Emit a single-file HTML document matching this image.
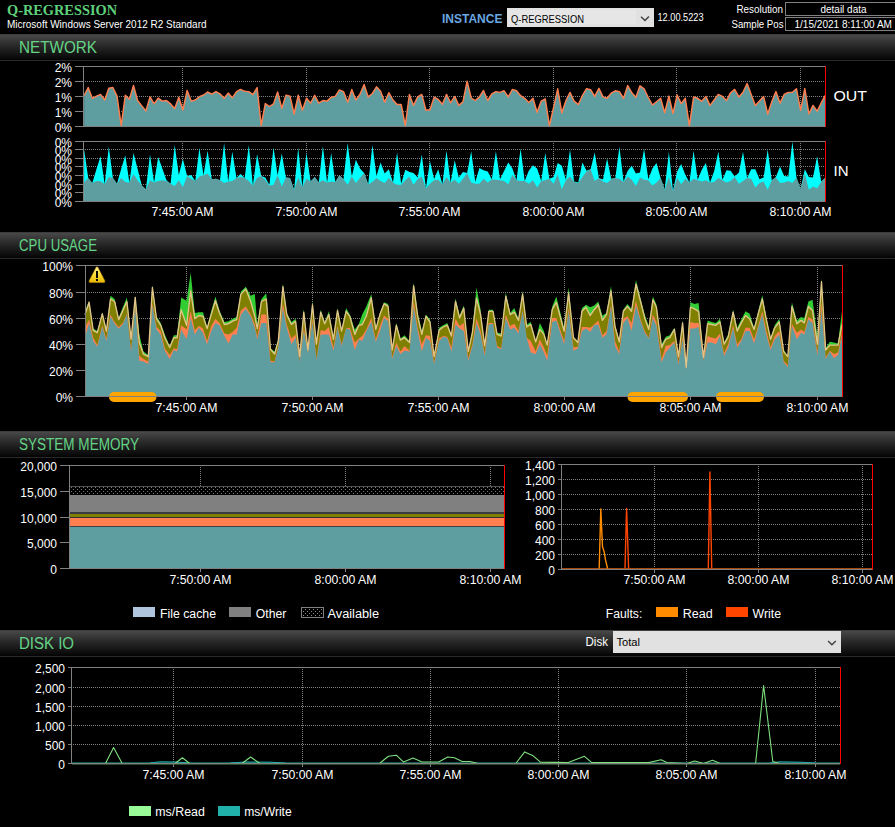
<!DOCTYPE html><html><head><meta charset="utf-8"><style>
*{margin:0;padding:0;box-sizing:border-box}
html,body{width:895px;height:827px;background:#000;overflow:hidden}
body{position:relative;font-family:"Liberation Sans", sans-serif;color:#fff}
.hdr{position:absolute;left:0;width:895px;height:27px;
 background:linear-gradient(#2e2e2e 0px,#4a4a4a 1px,#454545 2px,#2a2a2a 11px,#161616 19px,#0a0a0a 24px,#050505 25px,#050505 26px,#2a2a2a 26px,#2a2a2a 27px)}
.ht{position:absolute;left:19px;top:5px;font-size:15px;color:#5fd07c}
.dd{position:absolute;background:#e3e3e3;color:#000;font-size:11px;z-index:2}
.dd span{position:absolute;white-space:nowrap}
.dd i{position:absolute;width:7px;height:7px;border-right:1.3px solid #333;border-bottom:1.3px solid #333;transform:rotate(45deg) scale(0.9)}
svg.main{position:absolute;left:0;top:0;z-index:1}
</style></head><body>
<div class="hdr" style="top:34px"></div><div class="hdr" style="top:232px"></div><div class="hdr" style="top:431px"></div><div class="hdr" style="top:630px"></div>
<svg class="main" width="895" height="827" viewBox="0 0 895 827" shape-rendering="crispEdges"><defs><pattern id="dots" width="4" height="4" patternUnits="userSpaceOnUse"><rect x="0" y="0" width="1" height="1" fill="#909090"/><rect x="2" y="2" width="1" height="1" fill="#909090"/></pattern></defs>
<text x="7" y="15" font-size="15.5" fill="#5fd07c" text-anchor="start" font-weight="bold" font-family='"Liberation Serif", serif'  textLength="110" lengthAdjust="spacingAndGlyphs">Q-REGRESSION</text><text x="7" y="27.7" font-size="10.5" fill="#fff" text-anchor="start" font-weight="normal" font-family='"Liberation Sans", sans-serif'  textLength="199.5" lengthAdjust="spacingAndGlyphs">Microsoft Windows Server 2012 R2 Standard</text><text x="442" y="22.7" font-size="12" fill="#6aa6e0" text-anchor="start" font-weight="bold" font-family='"Liberation Sans", sans-serif' >INSTANCE</text><text x="657.5" y="20.8" font-size="10" fill="#fff" text-anchor="start" font-weight="normal" font-family='"Liberation Sans", sans-serif'  textLength="46" lengthAdjust="spacingAndGlyphs">12.00.5223</text><text x="736.5" y="12.5" font-size="10.5" fill="#fff" text-anchor="start" font-weight="normal" font-family='"Liberation Sans", sans-serif'  textLength="46.5" lengthAdjust="spacingAndGlyphs">Resolution</text><text x="731.5" y="27.8" font-size="10.5" fill="#fff" text-anchor="start" font-weight="normal" font-family='"Liberation Sans", sans-serif'  textLength="52" lengthAdjust="spacingAndGlyphs">Sample Pos</text><rect x="785.5" y="2.5" width="120" height="13" fill="none" stroke="#808080"/><rect x="785.5" y="17.5" width="120" height="13" fill="none" stroke="#808080"/><text x="820.5" y="13" font-size="10.5" fill="#fff" text-anchor="start" font-weight="normal" font-family='"Liberation Sans", sans-serif'  textLength="46" lengthAdjust="spacingAndGlyphs">detail data</text><text x="794.5" y="28" font-size="10.5" fill="#fff" text-anchor="start" font-weight="normal" font-family='"Liberation Sans", sans-serif'  textLength="97.5" lengthAdjust="spacingAndGlyphs">1/15/2021 8:11:00 AM</text><rect x="507" y="8" width="147" height="19" fill="#e1e1e1"/><rect x="508" y="9.5" width="128" height="14" fill="#e6e6e6"/><text x="511" y="22.7" font-size="11" fill="#000" text-anchor="start" font-weight="normal" font-family='"Liberation Sans", sans-serif'  textLength="73" lengthAdjust="spacingAndGlyphs">Q-REGRESSION</text><path d="M641,16.7 L645,20.6 L648.9,16.5" fill="none" stroke="#404040" stroke-width="1.4" shape-rendering="geometricPrecision"/><rect x="613" y="631" width="228" height="22" fill="#e1e1e1"/><text x="616.5" y="645.7" font-size="11" fill="#000" text-anchor="start" font-weight="normal" font-family='"Liberation Sans", sans-serif'  textLength="23.5" lengthAdjust="spacingAndGlyphs">Total</text><path d="M828.1,641 L831.9,644.8 L835.8,641" fill="none" stroke="#404040" stroke-width="1.4" shape-rendering="geometricPrecision"/><text x="19" y="52.8" font-size="16" fill="#64d486" text-anchor="start" font-weight="normal" font-family='"Liberation Sans", sans-serif'  textLength="78" lengthAdjust="spacingAndGlyphs">NETWORK</text><text x="19" y="250.8" font-size="16" fill="#64d486" text-anchor="start" font-weight="normal" font-family='"Liberation Sans", sans-serif'  textLength="78" lengthAdjust="spacingAndGlyphs">CPU USAGE</text><text x="19" y="449.8" font-size="16" fill="#64d486" text-anchor="start" font-weight="normal" font-family='"Liberation Sans", sans-serif'  textLength="120" lengthAdjust="spacingAndGlyphs">SYSTEM MEMORY</text><text x="19" y="648.8" font-size="16" fill="#64d486" text-anchor="start" font-weight="normal" font-family='"Liberation Sans", sans-serif'  textLength="55" lengthAdjust="spacingAndGlyphs">DISK IO</text><text x="585.5" y="645.8" font-size="12" fill="#fff" text-anchor="start" font-weight="normal" font-family='"Liberation Sans", sans-serif'  textLength="22.5" lengthAdjust="spacingAndGlyphs">Disk</text><rect x="75" y="66" width="8" height="1" fill="#808080"/><text x="72" y="72" font-size="12" fill="#fff" text-anchor="end" font-weight="normal" font-family='"Liberation Sans", sans-serif' >2%</text><line x1="85" y1="81.5" x2="825" y2="81.5" stroke="#808080" stroke-width="1" stroke-dasharray="1 1"/><rect x="75" y="81" width="8" height="1" fill="#808080"/><text x="72" y="87" font-size="12" fill="#fff" text-anchor="end" font-weight="normal" font-family='"Liberation Sans", sans-serif' >2%</text><line x1="85" y1="96.5" x2="825" y2="96.5" stroke="#808080" stroke-width="1" stroke-dasharray="1 1"/><rect x="75" y="96" width="8" height="1" fill="#808080"/><text x="72" y="102" font-size="12" fill="#fff" text-anchor="end" font-weight="normal" font-family='"Liberation Sans", sans-serif' >1%</text><line x1="85" y1="111.5" x2="825" y2="111.5" stroke="#808080" stroke-width="1" stroke-dasharray="1 1"/><rect x="75" y="111" width="8" height="1" fill="#808080"/><text x="72" y="117" font-size="12" fill="#fff" text-anchor="end" font-weight="normal" font-family='"Liberation Sans", sans-serif' >1%</text><rect x="75" y="126" width="8" height="1" fill="#808080"/><text x="72" y="132" font-size="12" fill="#fff" text-anchor="end" font-weight="normal" font-family='"Liberation Sans", sans-serif' >0%</text><line x1="182.5" y1="68" x2="182.5" y2="126" stroke="#808080" stroke-width="1" stroke-dasharray="1 1"/><line x1="306.5" y1="68" x2="306.5" y2="126" stroke="#808080" stroke-width="1" stroke-dasharray="1 1"/><line x1="429.5" y1="68" x2="429.5" y2="126" stroke="#808080" stroke-width="1" stroke-dasharray="1 1"/><line x1="553.5" y1="68" x2="553.5" y2="126" stroke="#808080" stroke-width="1" stroke-dasharray="1 1"/><line x1="676.5" y1="68" x2="676.5" y2="126" stroke="#808080" stroke-width="1" stroke-dasharray="1 1"/><line x1="800.5" y1="68" x2="800.5" y2="126" stroke="#808080" stroke-width="1" stroke-dasharray="1 1"/><path d="M84.1,126 L84.1,95.5 L88.2,87.5 L92.3,98.3 L96.5,96.1 L100.6,94.4 L104.7,100.0 L108.8,88.3 L112.9,87.5 L117.0,96.1 L121.2,125.7 L125.3,95.3 L129.4,99.2 L133.5,85.5 L137.6,100.5 L141.8,105.9 L145.9,110.9 L150.0,96.9 L154.1,103.9 L158.2,98.1 L162.3,101.1 L166.5,100.5 L170.6,103.9 L174.7,108.4 L178.8,97.2 L182.9,110.0 L187.1,90.5 L191.2,101.1 L195.3,100.0 L199.4,96.6 L203.5,95.0 L207.6,92.0 L211.8,94.2 L215.9,91.6 L220.0,93.8 L224.1,98.3 L228.2,93.1 L232.3,97.8 L236.5,91.6 L240.6,89.4 L244.7,91.3 L248.8,91.6 L252.9,94.6 L257.1,87.7 L261.2,125.5 L265.3,103.6 L269.4,106.5 L273.5,103.9 L277.6,92.0 L281.8,108.4 L285.9,95.3 L290.0,96.1 L294.1,114.0 L298.2,95.3 L302.4,110.3 L306.5,98.3 L310.6,103.1 L314.7,95.3 L318.8,103.1 L322.9,100.5 L327.1,101.1 L331.2,97.2 L335.3,96.4 L339.4,89.9 L343.5,91.6 L347.7,102.2 L351.8,89.4 L355.9,100.0 L360.0,94.2 L364.1,84.6 L368.2,96.9 L372.4,93.5 L376.5,86.8 L380.6,91.3 L384.7,102.2 L388.8,92.7 L393.0,100.0 L397.1,104.5 L401.2,104.5 L405.3,125.7 L409.4,94.4 L413.5,105.4 L417.7,96.9 L421.8,94.4 L425.9,110.3 L430.0,109.8 L434.1,97.2 L438.2,99.4 L442.4,104.2 L446.5,94.4 L450.6,102.8 L454.7,96.4 L458.8,105.4 L463.0,101.7 L467.1,81.2 L471.2,98.0 L475.3,100.5 L479.4,96.9 L483.5,90.5 L487.7,100.5 L491.8,93.8 L495.9,91.6 L500.0,92.4 L504.1,90.8 L508.3,96.9 L512.4,89.4 L516.5,90.8 L520.6,95.7 L524.7,98.3 L528.8,102.4 L533.0,98.3 L537.1,112.3 L541.2,101.1 L545.3,98.9 L549.4,125.7 L553.6,107.3 L557.7,88.8 L561.8,112.8 L565.9,100.8 L570.0,92.4 L574.1,101.1 L578.3,104.5 L582.4,95.5 L586.5,88.6 L590.6,89.7 L594.7,96.4 L598.9,88.3 L603.0,96.9 L607.1,98.3 L611.2,93.1 L615.3,90.8 L619.4,91.6 L623.6,98.3 L627.7,85.5 L631.8,92.7 L635.9,97.2 L640.0,85.8 L644.1,88.8 L648.3,97.5 L652.4,105.0 L656.5,101.7 L660.6,98.3 L664.7,112.8 L668.9,96.1 L673.0,113.6 L677.1,95.0 L681.2,103.6 L685.3,98.3 L689.4,125.7 L693.6,96.9 L697.7,98.3 L701.8,101.3 L705.9,96.4 L710.0,105.4 L714.2,100.0 L718.3,94.4 L722.4,96.4 L726.5,100.5 L730.6,92.7 L734.7,89.4 L738.9,96.9 L743.0,92.2 L747.1,83.5 L751.2,94.4 L755.3,105.4 L759.5,101.1 L763.6,96.4 L767.7,114.0 L771.8,101.7 L775.9,91.6 L780.0,103.1 L784.2,94.4 L788.3,92.4 L792.4,92.2 L796.5,88.8 L800.6,110.3 L804.8,88.6 L808.9,114.0 L813.0,105.4 L817.1,111.2 L821.2,103.0 L825.0,95.5 L825,126 Z" fill="#5f9ea0" shape-rendering="geometricPrecision"/><path d="M84.1,95.5 L88.2,87.5 L92.3,98.3 L96.5,96.1 L100.6,94.4 L104.7,100.0 L108.8,88.3 L112.9,87.5 L117.0,96.1 L121.2,125.7 L125.3,95.3 L129.4,99.2 L133.5,85.5 L137.6,100.5 L141.8,105.9 L145.9,110.9 L150.0,96.9 L154.1,103.9 L158.2,98.1 L162.3,101.1 L166.5,100.5 L170.6,103.9 L174.7,108.4 L178.8,97.2 L182.9,110.0 L187.1,90.5 L191.2,101.1 L195.3,100.0 L199.4,96.6 L203.5,95.0 L207.6,92.0 L211.8,94.2 L215.9,91.6 L220.0,93.8 L224.1,98.3 L228.2,93.1 L232.3,97.8 L236.5,91.6 L240.6,89.4 L244.7,91.3 L248.8,91.6 L252.9,94.6 L257.1,87.7 L261.2,125.5 L265.3,103.6 L269.4,106.5 L273.5,103.9 L277.6,92.0 L281.8,108.4 L285.9,95.3 L290.0,96.1 L294.1,114.0 L298.2,95.3 L302.4,110.3 L306.5,98.3 L310.6,103.1 L314.7,95.3 L318.8,103.1 L322.9,100.5 L327.1,101.1 L331.2,97.2 L335.3,96.4 L339.4,89.9 L343.5,91.6 L347.7,102.2 L351.8,89.4 L355.9,100.0 L360.0,94.2 L364.1,84.6 L368.2,96.9 L372.4,93.5 L376.5,86.8 L380.6,91.3 L384.7,102.2 L388.8,92.7 L393.0,100.0 L397.1,104.5 L401.2,104.5 L405.3,125.7 L409.4,94.4 L413.5,105.4 L417.7,96.9 L421.8,94.4 L425.9,110.3 L430.0,109.8 L434.1,97.2 L438.2,99.4 L442.4,104.2 L446.5,94.4 L450.6,102.8 L454.7,96.4 L458.8,105.4 L463.0,101.7 L467.1,81.2 L471.2,98.0 L475.3,100.5 L479.4,96.9 L483.5,90.5 L487.7,100.5 L491.8,93.8 L495.9,91.6 L500.0,92.4 L504.1,90.8 L508.3,96.9 L512.4,89.4 L516.5,90.8 L520.6,95.7 L524.7,98.3 L528.8,102.4 L533.0,98.3 L537.1,112.3 L541.2,101.1 L545.3,98.9 L549.4,125.7 L553.6,107.3 L557.7,88.8 L561.8,112.8 L565.9,100.8 L570.0,92.4 L574.1,101.1 L578.3,104.5 L582.4,95.5 L586.5,88.6 L590.6,89.7 L594.7,96.4 L598.9,88.3 L603.0,96.9 L607.1,98.3 L611.2,93.1 L615.3,90.8 L619.4,91.6 L623.6,98.3 L627.7,85.5 L631.8,92.7 L635.9,97.2 L640.0,85.8 L644.1,88.8 L648.3,97.5 L652.4,105.0 L656.5,101.7 L660.6,98.3 L664.7,112.8 L668.9,96.1 L673.0,113.6 L677.1,95.0 L681.2,103.6 L685.3,98.3 L689.4,125.7 L693.6,96.9 L697.7,98.3 L701.8,101.3 L705.9,96.4 L710.0,105.4 L714.2,100.0 L718.3,94.4 L722.4,96.4 L726.5,100.5 L730.6,92.7 L734.7,89.4 L738.9,96.9 L743.0,92.2 L747.1,83.5 L751.2,94.4 L755.3,105.4 L759.5,101.1 L763.6,96.4 L767.7,114.0 L771.8,101.7 L775.9,91.6 L780.0,103.1 L784.2,94.4 L788.3,92.4 L792.4,92.2 L796.5,88.8 L800.6,110.3 L804.8,88.6 L808.9,114.0 L813.0,105.4 L817.1,111.2 L821.2,103.0 L825.0,95.5" fill="none" stroke="#ff7f50" stroke-width="1.45" stroke-linejoin="round" shape-rendering="geometricPrecision"/><rect x="83" y="66" width="742" height="1" fill="#808080"/><rect x="83" y="126" width="742" height="1" fill="#808080"/><rect x="83" y="66" width="1" height="61" fill="#808080"/><rect x="825" y="66" width="1" height="61" fill="#ff0000"/><text x="833.5" y="100.6" font-size="14.5" fill="#fff" text-anchor="start" font-weight="normal" font-family='"Liberation Sans", sans-serif'  textLength="33.5" lengthAdjust="spacingAndGlyphs">OUT</text><rect x="75" y="141" width="8" height="1" fill="#808080"/><text x="72" y="147" font-size="12" fill="#fff" text-anchor="end" font-weight="normal" font-family='"Liberation Sans", sans-serif' >0%</text><line x1="85" y1="149.5" x2="825" y2="149.5" stroke="#808080" stroke-width="1" stroke-dasharray="1 1"/><rect x="75" y="149" width="8" height="1" fill="#808080"/><text x="72" y="155" font-size="12" fill="#fff" text-anchor="end" font-weight="normal" font-family='"Liberation Sans", sans-serif' >0%</text><line x1="85" y1="158.5" x2="825" y2="158.5" stroke="#808080" stroke-width="1" stroke-dasharray="1 1"/><rect x="75" y="158" width="8" height="1" fill="#808080"/><text x="72" y="164" font-size="12" fill="#fff" text-anchor="end" font-weight="normal" font-family='"Liberation Sans", sans-serif' >0%</text><line x1="85" y1="166.5" x2="825" y2="166.5" stroke="#808080" stroke-width="1" stroke-dasharray="1 1"/><rect x="75" y="166" width="8" height="1" fill="#808080"/><text x="72" y="172" font-size="12" fill="#fff" text-anchor="end" font-weight="normal" font-family='"Liberation Sans", sans-serif' >0%</text><line x1="85" y1="175.5" x2="825" y2="175.5" stroke="#808080" stroke-width="1" stroke-dasharray="1 1"/><rect x="75" y="175" width="8" height="1" fill="#808080"/><text x="72" y="181" font-size="12" fill="#fff" text-anchor="end" font-weight="normal" font-family='"Liberation Sans", sans-serif' >0%</text><line x1="85" y1="184.5" x2="825" y2="184.5" stroke="#808080" stroke-width="1" stroke-dasharray="1 1"/><rect x="75" y="184" width="8" height="1" fill="#808080"/><text x="72" y="190" font-size="12" fill="#fff" text-anchor="end" font-weight="normal" font-family='"Liberation Sans", sans-serif' >0%</text><line x1="85" y1="192.5" x2="825" y2="192.5" stroke="#808080" stroke-width="1" stroke-dasharray="1 1"/><rect x="75" y="192" width="8" height="1" fill="#808080"/><text x="72" y="198" font-size="12" fill="#fff" text-anchor="end" font-weight="normal" font-family='"Liberation Sans", sans-serif' >0%</text><rect x="75" y="201" width="8" height="1" fill="#808080"/><text x="72" y="207" font-size="12" fill="#fff" text-anchor="end" font-weight="normal" font-family='"Liberation Sans", sans-serif' >0%</text><line x1="182.5" y1="143" x2="182.5" y2="201" stroke="#808080" stroke-width="1" stroke-dasharray="1 1"/><line x1="306.5" y1="143" x2="306.5" y2="201" stroke="#808080" stroke-width="1" stroke-dasharray="1 1"/><line x1="429.5" y1="143" x2="429.5" y2="201" stroke="#808080" stroke-width="1" stroke-dasharray="1 1"/><line x1="553.5" y1="143" x2="553.5" y2="201" stroke="#808080" stroke-width="1" stroke-dasharray="1 1"/><line x1="676.5" y1="143" x2="676.5" y2="201" stroke="#808080" stroke-width="1" stroke-dasharray="1 1"/><line x1="800.5" y1="143" x2="800.5" y2="201" stroke="#808080" stroke-width="1" stroke-dasharray="1 1"/><path d="M84.1,201 L84.1,149.1 L88.2,178.1 L92.3,183.1 L96.5,169.0 L100.6,156.3 L104.7,184.3 L108.8,146.8 L112.9,178.1 L117.0,183.7 L121.2,169.0 L125.3,155.2 L129.4,182.6 L133.5,153.0 L137.6,169.0 L141.8,185.4 L145.9,189.3 L150.0,154.6 L154.1,182.6 L158.2,156.9 L162.3,168.6 L166.5,180.3 L170.6,183.7 L174.7,145.1 L178.8,175.0 L182.9,159.1 L187.1,175.9 L191.2,175.0 L195.3,180.9 L199.4,147.9 L203.5,175.3 L207.6,150.7 L211.8,179.2 L215.9,178.7 L220.0,180.3 L224.1,142.9 L228.2,181.5 L232.3,151.8 L236.5,178.1 L240.6,173.9 L244.7,178.1 L248.8,145.1 L252.9,185.4 L257.1,154.1 L261.2,175.9 L265.3,177.5 L269.4,185.0 L273.5,147.4 L277.6,175.3 L281.8,153.5 L285.9,177.5 L290.0,178.1 L294.1,189.8 L298.2,147.9 L302.4,187.0 L306.5,153.0 L310.6,181.5 L314.7,177.0 L318.8,182.6 L322.9,146.3 L327.1,182.6 L331.2,153.0 L335.3,182.0 L339.4,175.3 L343.5,179.2 L347.7,142.9 L351.8,176.4 L355.9,159.7 L360.0,168.6 L364.1,173.1 L368.2,184.3 L372.4,145.1 L376.5,176.0 L380.6,162.5 L384.7,173.6 L388.8,169.2 L393.0,182.6 L397.1,152.4 L401.2,183.7 L405.3,169.7 L409.4,172.0 L413.5,173.1 L417.7,177.5 L421.8,154.6 L425.9,188.2 L430.0,161.3 L434.1,179.0 L438.2,169.2 L442.4,184.3 L446.5,150.7 L450.6,182.6 L454.7,160.2 L458.8,177.5 L463.0,172.0 L467.1,173.1 L471.2,151.3 L475.3,182.0 L479.4,168.0 L483.5,170.3 L487.7,171.4 L491.8,179.2 L495.9,151.3 L500.0,179.2 L504.1,171.0 L508.3,162.5 L512.4,168.6 L516.5,180.3 L520.6,148.5 L524.7,180.9 L528.8,170.8 L533.0,165.3 L537.1,168.6 L541.2,180.9 L545.3,153.0 L549.4,178.7 L553.6,177.0 L557.7,163.0 L561.8,165.8 L565.9,179.8 L570.0,149.6 L574.1,181.5 L578.3,182.6 L582.4,162.5 L586.5,170.8 L590.6,169.2 L594.7,152.4 L598.9,178.1 L603.0,179.5 L607.1,158.6 L611.2,178.7 L615.3,178.1 L619.4,146.8 L623.6,181.5 L627.7,170.8 L631.8,165.8 L635.9,173.6 L640.0,172.5 L644.1,149.0 L648.3,179.2 L652.4,168.6 L656.5,163.0 L660.6,178.1 L664.7,189.3 L668.9,151.8 L673.0,190.4 L677.1,171.4 L681.2,164.1 L685.3,174.8 L689.4,182.6 L693.6,150.7 L697.7,179.8 L701.8,169.7 L705.9,163.0 L710.0,182.6 L714.2,171.0 L718.3,151.8 L722.4,179.8 L726.5,170.3 L730.6,170.8 L734.7,176.4 L738.9,172.5 L743.0,151.8 L747.1,178.1 L751.2,169.2 L755.3,169.2 L759.5,179.2 L763.6,177.5 L767.7,149.6 L771.8,180.3 L775.9,177.0 L780.0,166.4 L784.2,175.9 L788.3,176.5 L792.4,141.8 L796.5,177.5 L800.6,189.3 L804.8,169.2 L808.9,177.0 L813.0,177.5 L817.1,156.3 L821.2,181.5 L825.0,178.1 L825,201 Z" fill="#00ffff" shape-rendering="geometricPrecision"/><path d="M84.1,201 L84.1,182.6 L88.2,178.1 L92.3,183.1 L96.5,180.9 L100.6,181.2 L104.7,184.3 L108.8,177.0 L112.9,178.1 L117.0,183.7 L121.2,178.1 L125.3,182.0 L129.4,182.6 L133.5,174.2 L137.6,180.3 L141.8,185.4 L145.9,189.3 L150.0,180.3 L154.1,182.6 L158.2,180.9 L162.3,180.3 L166.5,181.0 L170.6,183.7 L174.7,186.0 L178.8,180.3 L182.9,187.0 L187.1,175.9 L191.2,178.7 L195.3,180.9 L199.4,176.4 L203.5,175.3 L207.6,173.6 L211.8,179.2 L215.9,178.7 L220.0,180.3 L224.1,183.1 L228.2,181.5 L232.3,180.9 L236.5,178.1 L240.6,177.0 L244.7,178.1 L248.8,180.9 L252.9,185.4 L257.1,178.1 L261.2,175.9 L265.3,180.3 L269.4,185.4 L273.5,184.8 L277.6,175.3 L281.8,186.5 L285.9,177.5 L290.0,178.1 L294.1,189.8 L298.2,177.5 L302.4,187.0 L306.5,178.7 L310.6,181.5 L314.7,177.0 L318.8,182.6 L322.9,180.3 L327.1,182.6 L331.2,181.5 L335.3,182.0 L339.4,175.3 L343.5,179.2 L347.7,184.8 L351.8,176.4 L355.9,183.1 L360.0,178.1 L364.1,173.1 L368.2,184.3 L372.4,182.0 L376.5,178.1 L380.6,180.9 L384.7,183.1 L388.8,178.1 L393.0,182.6 L397.1,184.8 L401.2,184.8 L405.3,180.3 L409.4,176.4 L413.5,184.8 L417.7,179.2 L421.8,176.4 L425.9,188.2 L430.0,183.7 L434.1,180.3 L438.2,179.8 L442.4,184.3 L446.5,177.0 L450.6,182.6 L454.7,179.8 L458.8,183.7 L463.0,178.7 L467.1,173.1 L471.2,182.6 L475.3,183.7 L479.4,183.7 L483.5,178.7 L487.7,182.6 L491.8,179.2 L495.9,179.8 L500.0,180.3 L504.1,180.9 L508.3,184.3 L512.4,174.8 L516.5,180.3 L520.6,180.9 L524.7,180.9 L528.8,183.7 L533.0,180.3 L537.1,187.6 L541.2,180.9 L545.3,180.3 L549.4,178.7 L553.6,183.7 L557.7,174.2 L561.8,189.3 L565.9,180.3 L570.0,176.4 L574.1,182.0 L578.3,183.1 L582.4,177.0 L586.5,171.4 L590.6,169.2 L594.7,180.9 L598.9,178.1 L603.0,181.5 L607.1,183.1 L611.2,179.2 L615.3,178.1 L619.4,178.7 L623.6,182.0 L627.7,176.4 L631.8,179.8 L635.9,186.0 L640.0,177.5 L644.1,179.8 L648.3,180.3 L652.4,185.4 L656.5,182.6 L660.6,178.1 L664.7,189.8 L668.9,177.0 L673.0,191.0 L677.1,178.1 L681.2,184.3 L685.3,178.7 L689.4,182.6 L693.6,178.7 L697.7,180.3 L701.8,181.5 L705.9,180.3 L710.0,182.6 L714.2,182.0 L718.3,178.1 L722.4,180.3 L726.5,182.6 L730.6,180.9 L734.7,177.0 L738.9,183.7 L743.0,180.9 L747.1,178.1 L751.2,178.7 L755.3,187.6 L759.5,183.1 L763.6,181.5 L767.7,189.8 L771.8,180.3 L775.9,177.5 L780.0,183.1 L784.2,182.6 L788.3,180.9 L792.4,183.1 L796.5,177.5 L800.6,189.3 L804.8,173.6 L808.9,189.8 L813.0,186.5 L817.1,188.2 L821.2,182.0 L825.0,178.1 L825,201 Z" fill="#5f9ea0" shape-rendering="geometricPrecision"/><rect x="83" y="141" width="742" height="1" fill="#808080"/><rect x="83" y="201" width="742" height="1" fill="#808080"/><rect x="83" y="141" width="1" height="61" fill="#808080"/><rect x="825" y="141" width="1" height="61" fill="#ff0000"/><rect x="182" y="202" width="1" height="3" fill="#808080"/><rect x="306" y="202" width="1" height="3" fill="#808080"/><rect x="429" y="202" width="1" height="3" fill="#808080"/><rect x="553" y="202" width="1" height="3" fill="#808080"/><rect x="676" y="202" width="1" height="3" fill="#808080"/><rect x="800" y="202" width="1" height="3" fill="#808080"/><text x="182.5" y="216" font-size="12" fill="#fff" text-anchor="middle" font-weight="normal" font-family='"Liberation Sans", sans-serif'  textLength="62" lengthAdjust="spacingAndGlyphs">7:45:00 AM</text><text x="306.5" y="216" font-size="12" fill="#fff" text-anchor="middle" font-weight="normal" font-family='"Liberation Sans", sans-serif'  textLength="62" lengthAdjust="spacingAndGlyphs">7:50:00 AM</text><text x="429.5" y="216" font-size="12" fill="#fff" text-anchor="middle" font-weight="normal" font-family='"Liberation Sans", sans-serif'  textLength="62" lengthAdjust="spacingAndGlyphs">7:55:00 AM</text><text x="553.5" y="216" font-size="12" fill="#fff" text-anchor="middle" font-weight="normal" font-family='"Liberation Sans", sans-serif'  textLength="62" lengthAdjust="spacingAndGlyphs">8:00:00 AM</text><text x="676.5" y="216" font-size="12" fill="#fff" text-anchor="middle" font-weight="normal" font-family='"Liberation Sans", sans-serif'  textLength="62" lengthAdjust="spacingAndGlyphs">8:05:00 AM</text><text x="800.5" y="216" font-size="12" fill="#fff" text-anchor="middle" font-weight="normal" font-family='"Liberation Sans", sans-serif'  textLength="62" lengthAdjust="spacingAndGlyphs">8:10:00 AM</text><text x="833.5" y="175.9" font-size="14.5" fill="#fff" text-anchor="start" font-weight="normal" font-family='"Liberation Sans", sans-serif'  textLength="15" lengthAdjust="spacingAndGlyphs">IN</text><rect x="76" y="265" width="9" height="1" fill="#808080"/><text x="73" y="271" font-size="12" fill="#fff" text-anchor="end" font-weight="normal" font-family='"Liberation Sans", sans-serif' >100%</text><line x1="87" y1="292.5" x2="842" y2="292.5" stroke="#808080" stroke-width="1" stroke-dasharray="1 1"/><rect x="76" y="292" width="9" height="1" fill="#808080"/><text x="73" y="298" font-size="12" fill="#fff" text-anchor="end" font-weight="normal" font-family='"Liberation Sans", sans-serif' >80%</text><line x1="87" y1="318.5" x2="842" y2="318.5" stroke="#808080" stroke-width="1" stroke-dasharray="1 1"/><rect x="76" y="318" width="9" height="1" fill="#808080"/><text x="73" y="324" font-size="12" fill="#fff" text-anchor="end" font-weight="normal" font-family='"Liberation Sans", sans-serif' >60%</text><line x1="87" y1="344.5" x2="842" y2="344.5" stroke="#808080" stroke-width="1" stroke-dasharray="1 1"/><rect x="76" y="344" width="9" height="1" fill="#808080"/><text x="73" y="350" font-size="12" fill="#fff" text-anchor="end" font-weight="normal" font-family='"Liberation Sans", sans-serif' >40%</text><line x1="87" y1="370.5" x2="842" y2="370.5" stroke="#808080" stroke-width="1" stroke-dasharray="1 1"/><rect x="76" y="370" width="9" height="1" fill="#808080"/><text x="73" y="376" font-size="12" fill="#fff" text-anchor="end" font-weight="normal" font-family='"Liberation Sans", sans-serif' >20%</text><rect x="76" y="396" width="9" height="1" fill="#808080"/><text x="73" y="402" font-size="12" fill="#fff" text-anchor="end" font-weight="normal" font-family='"Liberation Sans", sans-serif' >0%</text><line x1="186.5" y1="267" x2="186.5" y2="396" stroke="#808080" stroke-width="1" stroke-dasharray="1 1"/><line x1="312.5" y1="267" x2="312.5" y2="396" stroke="#808080" stroke-width="1" stroke-dasharray="1 1"/><line x1="438.5" y1="267" x2="438.5" y2="396" stroke="#808080" stroke-width="1" stroke-dasharray="1 1"/><line x1="564.5" y1="267" x2="564.5" y2="396" stroke="#808080" stroke-width="1" stroke-dasharray="1 1"/><line x1="690.5" y1="267" x2="690.5" y2="396" stroke="#808080" stroke-width="1" stroke-dasharray="1 1"/><line x1="817.5" y1="267" x2="817.5" y2="396" stroke="#808080" stroke-width="1" stroke-dasharray="1 1"/><path d="M85,396 L85.0,311.3 L89.1,300.7 L93.2,328.6 L97.3,331.1 L102.3,312.2 L106.4,329.4 L110.5,295.7 L114.6,299.0 L118.7,317.9 L122.8,307.2 L126.9,297.4 L131.1,337.7 L135.2,295.7 L139.3,334.4 L143.4,351.6 L148.3,354.9 L152.4,285.0 L156.5,316.3 L160.7,322.9 L164.8,334.4 L169.7,345.9 L173.8,335.2 L177.1,335.2 L181.2,297.4 L186.6,300.7 L190.7,272.7 L194.8,313.0 L198.9,312.2 L203.0,312.2 L207.1,327.0 L211.2,311.3 L215.4,296.5 L219.5,310.5 L224.4,322.0 L228.5,321.2 L232.6,318.7 L236.7,317.1 L240.9,291.6 L245.8,286.7 L250.7,295.7 L254.8,294.1 L257.3,324.5 L261.4,299.0 L266.3,293.2 L270.5,348.3 L274.6,351.6 L278.3,339.3 L282.9,283.4 L286.8,313.0 L291.4,322.0 L295.6,318.7 L299.7,356.6 L303.8,308.9 L307.9,350.0 L312.5,301.5 L316.4,344.2 L320.7,309.7 L324.7,322.0 L328.9,311.3 L333.4,337.7 L337.5,308.1 L341.6,329.4 L346.1,308.1 L349.8,314.6 L354.8,329.4 L358.9,323.7 L362.2,314.6 L366.3,306.4 L371.3,294.1 L375.8,327.8 L379.9,313.0 L384.0,302.3 L388.1,303.9 L392.2,349.2 L396.3,322.9 L400.4,338.5 L404.5,335.2 L409.5,340.9 L413.6,282.6 L417.7,313.0 L421.8,331.1 L425.9,314.6 L430.0,319.6 L434.1,355.8 L439.1,327.8 L443.2,325.3 L447.3,322.9 L451.4,334.4 L455.5,298.2 L459.6,315.5 L463.8,305.6 L468.3,350.0 L472.4,329.4 L476.5,287.5 L480.6,309.7 L484.7,345.9 L488.8,309.7 L493.0,309.7 L497.1,332.7 L501.2,333.5 L505.8,292.4 L510.2,313.0 L514.3,308.1 L518.5,318.7 L522.6,290.8 L526.7,324.5 L530.8,322.0 L535.7,340.9 L539.8,322.9 L543.9,331.1 L547.2,344.2 L552.2,306.4 L556.3,296.5 L564.1,327.8 L568.6,287.5 L573.5,336.8 L577.8,340.9 L581.9,308.1 L586.0,304.8 L590.1,307.2 L594.2,305.6 L598.3,301.5 L602.4,315.5 L606.5,313.0 L611.0,285.8 L615.1,325.3 L619.2,340.1 L623.3,309.7 L627.4,303.9 L631.5,308.9 L636.0,280.1 L640.6,299.0 L644.7,314.6 L648.8,326.1 L652.9,296.5 L656.4,304.4 L661.6,344.2 L665.7,336.8 L669.8,335.2 L674.4,327.8 L678.5,355.8 L682.6,320.4 L686.2,366.4 L690.4,302.3 L694.5,303.9 L698.6,303.1 L703.5,355.8 L707.6,320.4 L711.7,322.0 L715.9,322.9 L720.0,318.7 L724.1,342.6 L728.2,334.4 L733.1,309.7 L737.2,327.8 L741.3,319.6 L745.5,311.3 L749.6,313.8 L754.1,327.8 L758.2,311.3 L762.3,294.9 L766.4,317.9 L770.6,337.7 L774.7,325.3 L779.3,318.7 L783.7,350.0 L787.8,355.8 L791.9,302.3 L796.9,320.4 L801.0,317.1 L804.3,317.9 L808.4,301.5 L812.5,299.8 L817.4,336.0 L821.5,278.4 L825.7,348.3 L829.8,341.8 L833.9,342.6 L838.0,343.4 L842.0,311.3 L842,396 Z" fill="#32cd32" shape-rendering="geometricPrecision"/><path d="M85,396 L85.0,314.6 L89.1,302.3 L93.2,330.3 L97.3,332.7 L102.3,313.8 L106.4,331.1 L110.5,299.0 L114.6,301.5 L118.7,319.6 L122.8,310.5 L126.9,301.5 L131.1,339.3 L135.2,297.4 L139.3,342.6 L143.4,354.1 L148.3,356.6 L152.4,287.5 L156.5,318.7 L160.7,325.3 L164.8,337.7 L169.7,347.5 L173.8,337.7 L177.1,337.7 L181.2,309.7 L186.6,325.3 L190.7,290.8 L194.8,318.7 L198.9,315.5 L203.0,316.3 L207.1,328.6 L211.2,314.6 L215.4,300.7 L219.5,313.0 L224.4,324.5 L228.5,323.7 L232.6,321.2 L236.7,319.6 L240.9,294.1 L245.8,289.1 L250.7,301.5 L254.8,316.3 L257.3,328.6 L261.4,301.5 L266.3,299.0 L270.5,349.2 L274.6,354.1 L278.3,340.9 L282.9,286.7 L286.8,314.6 L291.4,324.5 L295.6,321.2 L299.7,356.6 L303.8,312.2 L307.9,350.0 L312.5,304.8 L316.4,344.2 L320.7,312.2 L324.7,323.7 L328.9,314.6 L333.4,339.3 L337.5,310.5 L341.6,331.1 L346.1,311.3 L349.8,316.3 L354.8,334.4 L358.9,325.3 L362.2,324.5 L366.3,316.3 L371.3,297.8 L375.8,329.4 L379.9,314.6 L384.0,303.9 L388.1,306.4 L392.2,350.0 L396.3,325.3 L400.4,340.1 L404.5,337.7 L409.5,342.6 L413.6,285.8 L417.7,316.3 L421.8,334.4 L425.9,316.3 L430.0,322.0 L434.1,356.6 L439.1,330.3 L443.2,327.0 L447.3,325.3 L451.4,336.0 L455.5,301.5 L459.6,317.9 L463.8,308.1 L468.3,351.6 L472.4,332.7 L476.5,298.2 L480.6,314.6 L484.7,345.9 L488.8,311.3 L493.0,311.3 L497.1,334.4 L501.2,336.0 L505.8,296.5 L510.2,314.6 L514.3,312.2 L518.5,320.4 L522.6,294.1 L526.7,327.0 L530.8,324.5 L535.7,341.8 L539.8,329.4 L543.9,334.4 L547.2,345.1 L552.2,309.7 L556.3,302.3 L564.1,331.1 L568.6,293.2 L573.5,337.7 L577.8,342.6 L581.9,311.3 L586.0,307.2 L590.1,315.5 L594.2,309.7 L598.3,304.8 L602.4,320.4 L606.5,314.6 L611.0,290.8 L615.1,327.0 L619.2,341.8 L623.3,311.3 L627.4,306.4 L631.5,311.3 L636.0,284.2 L640.6,301.5 L644.7,317.9 L648.8,329.4 L652.9,299.8 L656.4,307.2 L661.6,347.5 L665.7,339.3 L669.8,337.7 L674.4,329.4 L678.5,356.6 L682.6,322.9 L686.2,367.3 L690.4,307.2 L694.5,308.9 L698.6,311.3 L703.5,357.4 L707.6,323.7 L711.7,324.5 L715.9,325.3 L720.0,322.0 L724.1,344.2 L728.2,336.8 L733.1,312.2 L737.2,331.1 L741.3,322.9 L745.5,315.5 L749.6,318.7 L754.1,329.4 L758.2,313.8 L762.3,299.0 L766.4,319.6 L770.6,339.3 L774.7,327.8 L779.3,322.0 L783.7,351.6 L787.8,356.6 L791.9,306.4 L796.9,323.7 L801.0,320.4 L804.3,322.9 L808.4,306.4 L812.5,310.5 L817.4,344.2 L821.5,281.7 L825.7,350.0 L829.8,345.1 L833.9,345.1 L838.0,345.1 L842.0,324.5 L842,396 Z" fill="#808000" shape-rendering="geometricPrecision"/><path d="M85,396 L85.0,327.8 L89.1,319.6 L93.2,337.7 L97.3,345.1 L102.3,325.3 L106.4,338.5 L110.5,314.6 L114.6,322.0 L118.7,327.0 L122.8,322.9 L126.9,313.8 L131.1,350.0 L135.2,305.6 L139.3,355.8 L143.4,359.0 L148.3,361.5 L152.4,303.1 L156.5,327.0 L160.7,331.1 L164.8,348.3 L169.7,354.9 L173.8,348.3 L177.1,349.2 L181.2,325.3 L186.6,329.4 L190.7,311.3 L194.8,330.3 L198.9,326.1 L203.0,328.6 L207.1,340.9 L211.2,326.1 L215.4,318.7 L219.5,322.9 L224.4,333.5 L228.5,334.4 L232.6,331.9 L236.7,327.8 L240.9,310.5 L245.8,306.4 L250.7,314.6 L254.8,324.5 L257.3,336.8 L261.4,314.6 L266.3,314.6 L270.5,360.7 L274.6,361.5 L278.3,345.9 L282.9,303.1 L286.8,324.5 L291.4,338.5 L295.6,334.4 L299.7,360.7 L303.8,327.8 L307.9,352.5 L312.5,318.7 L316.4,359.0 L320.7,330.3 L324.7,331.1 L328.9,327.0 L333.4,347.5 L337.5,326.1 L341.6,344.2 L346.1,328.6 L349.8,327.8 L354.8,342.6 L358.9,338.5 L362.2,336.0 L366.3,329.4 L371.3,317.9 L375.8,339.3 L379.9,326.1 L384.0,315.5 L388.1,318.7 L392.2,357.4 L396.3,342.6 L400.4,351.6 L404.5,345.9 L409.5,350.8 L413.6,300.7 L417.7,327.8 L421.8,344.2 L425.9,335.2 L430.0,336.0 L434.1,362.3 L439.1,338.5 L443.2,336.0 L447.3,336.8 L451.4,347.5 L455.5,318.7 L459.6,326.1 L463.8,322.9 L468.3,358.2 L472.4,344.2 L476.5,317.9 L480.6,331.1 L484.7,353.3 L488.8,322.9 L493.0,322.9 L497.1,345.9 L501.2,348.3 L505.8,314.6 L510.2,326.1 L514.3,323.7 L518.5,331.1 L522.6,309.7 L526.7,337.7 L530.8,340.9 L535.7,351.6 L539.8,339.3 L543.9,347.5 L547.2,355.8 L552.2,317.9 L556.3,317.9 L564.1,340.9 L568.6,308.1 L573.5,347.5 L577.8,346.7 L581.9,327.0 L586.0,327.0 L590.1,327.8 L594.2,324.5 L598.3,320.4 L602.4,335.2 L606.5,331.1 L611.0,304.8 L615.1,340.9 L619.2,351.6 L623.3,318.7 L627.4,316.3 L631.5,322.9 L636.0,300.7 L640.6,319.6 L644.7,331.1 L648.8,337.7 L652.9,314.6 L656.4,322.0 L661.6,359.0 L665.7,345.9 L669.8,345.1 L674.4,340.9 L678.5,362.3 L682.6,336.8 L686.2,368.1 L690.4,322.0 L694.5,322.9 L698.6,322.9 L703.5,359.9 L707.6,336.0 L711.7,337.7 L715.9,338.5 L720.0,333.5 L724.1,353.3 L728.2,344.2 L733.1,325.3 L737.2,344.2 L741.3,339.3 L745.5,327.8 L749.6,327.8 L754.1,339.3 L758.2,326.1 L762.3,311.3 L766.4,331.1 L770.6,347.5 L774.7,336.0 L779.3,331.1 L783.7,360.7 L787.8,365.6 L791.9,323.7 L796.9,332.7 L801.0,329.4 L804.3,331.9 L808.4,317.1 L812.5,319.6 L817.4,352.5 L821.5,303.1 L825.7,357.4 L829.8,350.8 L833.9,354.1 L838.0,352.5 L842.0,332.7 L842,396 Z" fill="#ff7f50" shape-rendering="geometricPrecision"/><path d="M85,396 L85.0,337.7 L89.1,322.9 L93.2,340.9 L97.3,346.7 L102.3,327.0 L106.4,340.9 L110.5,316.3 L114.6,323.7 L118.7,328.6 L122.8,324.5 L126.9,314.6 L131.1,351.6 L135.2,307.2 L139.3,360.7 L143.4,361.5 L148.3,364.0 L152.4,305.6 L156.5,329.4 L160.7,334.4 L164.8,350.8 L169.7,359.0 L173.8,350.0 L177.1,351.6 L181.2,329.4 L186.6,339.3 L190.7,317.9 L194.8,334.4 L198.9,327.8 L203.0,332.7 L207.1,344.2 L211.2,331.1 L215.4,322.9 L219.5,325.3 L224.4,336.0 L228.5,343.4 L232.6,334.4 L236.7,334.4 L240.9,314.6 L245.8,308.9 L250.7,316.3 L254.8,327.8 L257.3,339.3 L261.4,322.9 L266.3,322.9 L270.5,362.3 L274.6,362.3 L278.3,347.5 L282.9,308.1 L286.8,327.8 L291.4,344.2 L295.6,337.7 L299.7,361.5 L303.8,331.1 L307.9,353.3 L312.5,322.0 L316.4,359.9 L320.7,334.4 L324.7,334.4 L328.9,334.4 L333.4,350.8 L337.5,327.8 L341.6,345.9 L346.1,328.6 L349.8,329.4 L354.8,350.0 L358.9,339.3 L362.2,340.9 L366.3,331.1 L371.3,321.6 L375.8,341.8 L379.9,331.1 L384.0,317.9 L388.1,321.2 L392.2,359.0 L396.3,345.9 L400.4,354.1 L404.5,350.8 L409.5,351.6 L413.6,306.4 L417.7,331.1 L421.8,351.6 L425.9,337.7 L430.0,340.9 L434.1,364.0 L439.1,340.9 L443.2,336.8 L447.3,337.7 L451.4,351.6 L455.5,324.5 L459.6,328.6 L463.8,331.1 L468.3,360.7 L472.4,345.9 L476.5,322.9 L480.6,334.4 L484.7,355.8 L488.8,324.5 L493.0,323.7 L497.1,347.5 L501.2,349.2 L505.8,317.9 L510.2,329.4 L514.3,327.8 L518.5,333.5 L522.6,311.3 L526.7,337.7 L530.8,352.5 L535.7,354.1 L539.8,344.2 L543.9,352.5 L547.2,360.7 L552.2,322.0 L556.3,320.4 L564.1,344.2 L568.6,311.3 L573.5,350.8 L577.8,348.3 L581.9,331.1 L586.0,328.6 L590.1,331.9 L594.2,325.3 L598.3,324.5 L602.4,337.7 L606.5,334.4 L611.0,306.4 L615.1,345.9 L619.2,354.1 L623.3,322.9 L627.4,317.9 L631.5,331.1 L636.0,305.6 L640.6,321.2 L644.7,332.7 L648.8,338.5 L652.9,317.9 L656.4,326.1 L661.6,362.3 L665.7,352.5 L669.8,347.5 L674.4,342.6 L678.5,364.8 L682.6,339.3 L686.2,368.9 L690.4,328.6 L694.5,328.6 L698.6,327.0 L703.5,360.7 L707.6,342.6 L711.7,342.6 L715.9,344.2 L720.0,336.0 L724.1,355.8 L728.2,347.5 L733.1,327.8 L737.2,347.5 L741.3,340.9 L745.5,331.1 L749.6,331.1 L754.1,343.4 L758.2,327.8 L762.3,314.6 L766.4,335.2 L770.6,350.0 L774.7,339.3 L779.3,334.4 L783.7,362.3 L787.8,367.3 L791.9,326.1 L796.9,339.3 L801.0,332.7 L804.3,334.4 L808.4,319.6 L812.5,322.9 L817.4,355.8 L821.5,309.7 L825.7,359.0 L829.8,351.6 L833.9,358.2 L838.0,354.9 L842.0,336.0 L842,396 Z" fill="#5f9ea0" shape-rendering="geometricPrecision"/><path d="M85.0,314.6 L89.1,302.3 L93.2,330.3 L97.3,332.7 L102.3,313.8 L106.4,331.1 L110.5,299.0 L114.6,301.5 L118.7,319.6 L122.8,310.5 L126.9,301.5 L131.1,339.3 L135.2,297.4 L139.3,342.6 L143.4,354.1 L148.3,356.6 L152.4,287.5 L156.5,318.7 L160.7,325.3 L164.8,337.7 L169.7,347.5 L173.8,337.7 L177.1,337.7 L181.2,309.7 L186.6,325.3 L190.7,290.8 L194.8,318.7 L198.9,315.5 L203.0,316.3 L207.1,328.6 L211.2,314.6 L215.4,300.7 L219.5,313.0 L224.4,324.5 L228.5,323.7 L232.6,321.2 L236.7,319.6 L240.9,294.1 L245.8,289.1 L250.7,301.5 L254.8,316.3 L257.3,328.6 L261.4,301.5 L266.3,299.0 L270.5,349.2 L274.6,354.1 L278.3,340.9 L282.9,286.7 L286.8,314.6 L291.4,324.5 L295.6,321.2 L299.7,356.6 L303.8,312.2 L307.9,350.0 L312.5,304.8 L316.4,344.2 L320.7,312.2 L324.7,323.7 L328.9,314.6 L333.4,339.3 L337.5,310.5 L341.6,331.1 L346.1,311.3 L349.8,316.3 L354.8,334.4 L358.9,325.3 L362.2,324.5 L366.3,316.3 L371.3,297.8 L375.8,329.4 L379.9,314.6 L384.0,303.9 L388.1,306.4 L392.2,350.0 L396.3,325.3 L400.4,340.1 L404.5,337.7 L409.5,342.6 L413.6,285.8 L417.7,316.3 L421.8,334.4 L425.9,316.3 L430.0,322.0 L434.1,356.6 L439.1,330.3 L443.2,327.0 L447.3,325.3 L451.4,336.0 L455.5,301.5 L459.6,317.9 L463.8,308.1 L468.3,351.6 L472.4,332.7 L476.5,298.2 L480.6,314.6 L484.7,345.9 L488.8,311.3 L493.0,311.3 L497.1,334.4 L501.2,336.0 L505.8,296.5 L510.2,314.6 L514.3,312.2 L518.5,320.4 L522.6,294.1 L526.7,327.0 L530.8,324.5 L535.7,341.8 L539.8,329.4 L543.9,334.4 L547.2,345.1 L552.2,309.7 L556.3,302.3 L564.1,331.1 L568.6,293.2 L573.5,337.7 L577.8,342.6 L581.9,311.3 L586.0,307.2 L590.1,315.5 L594.2,309.7 L598.3,304.8 L602.4,320.4 L606.5,314.6 L611.0,290.8 L615.1,327.0 L619.2,341.8 L623.3,311.3 L627.4,306.4 L631.5,311.3 L636.0,284.2 L640.6,301.5 L644.7,317.9 L648.8,329.4 L652.9,299.8 L656.4,307.2 L661.6,347.5 L665.7,339.3 L669.8,337.7 L674.4,329.4 L678.5,356.6 L682.6,322.9 L686.2,367.3 L690.4,307.2 L694.5,308.9 L698.6,311.3 L703.5,357.4 L707.6,323.7 L711.7,324.5 L715.9,325.3 L720.0,322.0 L724.1,344.2 L728.2,336.8 L733.1,312.2 L737.2,331.1 L741.3,322.9 L745.5,315.5 L749.6,318.7 L754.1,329.4 L758.2,313.8 L762.3,299.0 L766.4,319.6 L770.6,339.3 L774.7,327.8 L779.3,322.0 L783.7,351.6 L787.8,356.6 L791.9,306.4 L796.9,323.7 L801.0,320.4 L804.3,322.9 L808.4,306.4 L812.5,310.5 L817.4,344.2 L821.5,281.7 L825.7,350.0 L829.8,345.1 L833.9,345.1 L838.0,345.1 L842.0,324.5" fill="none" stroke="#e2c48a" stroke-width="1.35" stroke-linejoin="round" shape-rendering="geometricPrecision"/><rect x="85" y="265" width="757" height="1" fill="#808080"/><rect x="85" y="396" width="757" height="1" fill="#808080"/><rect x="85" y="265" width="1" height="132" fill="#808080"/><rect x="842" y="265" width="1" height="132" fill="#ff0000"/><rect x="186" y="397" width="1" height="3" fill="#808080"/><rect x="312" y="397" width="1" height="3" fill="#808080"/><rect x="438" y="397" width="1" height="3" fill="#808080"/><rect x="564" y="397" width="1" height="3" fill="#808080"/><rect x="690" y="397" width="1" height="3" fill="#808080"/><rect x="817" y="397" width="1" height="3" fill="#808080"/><text x="186.5" y="412" font-size="12" fill="#fff" text-anchor="middle" font-weight="normal" font-family='"Liberation Sans", sans-serif'  textLength="62" lengthAdjust="spacingAndGlyphs">7:45:00 AM</text><text x="312.5" y="412" font-size="12" fill="#fff" text-anchor="middle" font-weight="normal" font-family='"Liberation Sans", sans-serif'  textLength="62" lengthAdjust="spacingAndGlyphs">7:50:00 AM</text><text x="438.5" y="412" font-size="12" fill="#fff" text-anchor="middle" font-weight="normal" font-family='"Liberation Sans", sans-serif'  textLength="62" lengthAdjust="spacingAndGlyphs">7:55:00 AM</text><text x="564.5" y="412" font-size="12" fill="#fff" text-anchor="middle" font-weight="normal" font-family='"Liberation Sans", sans-serif'  textLength="62" lengthAdjust="spacingAndGlyphs">8:00:00 AM</text><text x="690.5" y="412" font-size="12" fill="#fff" text-anchor="middle" font-weight="normal" font-family='"Liberation Sans", sans-serif'  textLength="62" lengthAdjust="spacingAndGlyphs">8:05:00 AM</text><text x="817.5" y="412" font-size="12" fill="#fff" text-anchor="middle" font-weight="normal" font-family='"Liberation Sans", sans-serif'  textLength="62" lengthAdjust="spacingAndGlyphs">8:10:00 AM</text><defs><linearGradient id="wg" x1="0" y1="0" x2="0" y2="1"><stop offset="0" stop-color="#fff09a"/><stop offset="0.5" stop-color="#f8d838"/><stop offset="1" stop-color="#e8b800"/></linearGradient></defs><path d="M97,266.8 Q97.6,266.8 98,267.5 L104.8,280.8 Q105.5,282.6 103.8,282.6 L90.2,282.6 Q88.5,282.6 89.2,280.8 L96,267.5 Q96.4,266.8 97,266.8 Z" fill="url(#wg)" stroke="#c89800" stroke-width="0.5" shape-rendering="geometricPrecision"/><rect x="96" y="271" width="2" height="7" fill="#000"/><rect x="96" y="279" width="2" height="2" fill="#000"/><rect x="109" y="392" width="47.5" height="10" rx="5" fill="#ffa500" shape-rendering="geometricPrecision"/><rect x="627.5" y="392" width="60.5" height="10" rx="5" fill="#ffa500" shape-rendering="geometricPrecision"/><rect x="716" y="392" width="48" height="10" rx="5" fill="#ffa500" shape-rendering="geometricPrecision"/><rect x="85" y="396" width="757" height="1" fill="#808080"/><rect x="60" y="465" width="9" height="1" fill="#808080"/><text x="57" y="471" font-size="12" fill="#fff" text-anchor="end" font-weight="normal" font-family='"Liberation Sans", sans-serif' >20,000</text><line x1="71" y1="491.5" x2="504" y2="491.5" stroke="#808080" stroke-width="1" stroke-dasharray="1 1"/><rect x="60" y="491" width="9" height="1" fill="#808080"/><text x="57" y="497" font-size="12" fill="#fff" text-anchor="end" font-weight="normal" font-family='"Liberation Sans", sans-serif' >15,000</text><line x1="71" y1="517.5" x2="504" y2="517.5" stroke="#808080" stroke-width="1" stroke-dasharray="1 1"/><rect x="60" y="517" width="9" height="1" fill="#808080"/><text x="57" y="523" font-size="12" fill="#fff" text-anchor="end" font-weight="normal" font-family='"Liberation Sans", sans-serif' >10,000</text><line x1="71" y1="542.5" x2="504" y2="542.5" stroke="#808080" stroke-width="1" stroke-dasharray="1 1"/><rect x="60" y="542" width="9" height="1" fill="#808080"/><text x="57" y="548" font-size="12" fill="#fff" text-anchor="end" font-weight="normal" font-family='"Liberation Sans", sans-serif' >5,000</text><rect x="60" y="568" width="9" height="1" fill="#808080"/><text x="57" y="574" font-size="12" fill="#fff" text-anchor="end" font-weight="normal" font-family='"Liberation Sans", sans-serif' >0</text><line x1="200.5" y1="467" x2="200.5" y2="568" stroke="#808080" stroke-width="1" stroke-dasharray="1 1"/><line x1="345.5" y1="467" x2="345.5" y2="568" stroke="#808080" stroke-width="1" stroke-dasharray="1 1"/><line x1="490.5" y1="467" x2="490.5" y2="568" stroke="#808080" stroke-width="1" stroke-dasharray="1 1"/><rect x="69" y="486" width="435" height="9" fill="#000"/><rect x="69" y="486" width="435" height="1" fill="#505050"/><path d="M71,487h1v1h-1zM75,487h1v1h-1zM79,487h1v1h-1zM83,487h1v1h-1zM87,487h1v1h-1zM91,487h1v1h-1zM95,487h1v1h-1zM99,487h1v1h-1zM103,487h1v1h-1zM107,487h1v1h-1zM111,487h1v1h-1zM115,487h1v1h-1zM119,487h1v1h-1zM123,487h1v1h-1zM127,487h1v1h-1zM131,487h1v1h-1zM135,487h1v1h-1zM139,487h1v1h-1zM143,487h1v1h-1zM147,487h1v1h-1zM151,487h1v1h-1zM155,487h1v1h-1zM159,487h1v1h-1zM163,487h1v1h-1zM167,487h1v1h-1zM171,487h1v1h-1zM175,487h1v1h-1zM179,487h1v1h-1zM183,487h1v1h-1zM187,487h1v1h-1zM191,487h1v1h-1zM195,487h1v1h-1zM199,487h1v1h-1zM203,487h1v1h-1zM207,487h1v1h-1zM211,487h1v1h-1zM215,487h1v1h-1zM219,487h1v1h-1zM223,487h1v1h-1zM227,487h1v1h-1zM231,487h1v1h-1zM235,487h1v1h-1zM239,487h1v1h-1zM243,487h1v1h-1zM247,487h1v1h-1zM251,487h1v1h-1zM255,487h1v1h-1zM259,487h1v1h-1zM263,487h1v1h-1zM267,487h1v1h-1zM271,487h1v1h-1zM275,487h1v1h-1zM279,487h1v1h-1zM283,487h1v1h-1zM287,487h1v1h-1zM291,487h1v1h-1zM295,487h1v1h-1zM299,487h1v1h-1zM303,487h1v1h-1zM307,487h1v1h-1zM311,487h1v1h-1zM315,487h1v1h-1zM319,487h1v1h-1zM323,487h1v1h-1zM327,487h1v1h-1zM331,487h1v1h-1zM335,487h1v1h-1zM339,487h1v1h-1zM343,487h1v1h-1zM347,487h1v1h-1zM351,487h1v1h-1zM355,487h1v1h-1zM359,487h1v1h-1zM363,487h1v1h-1zM367,487h1v1h-1zM371,487h1v1h-1zM375,487h1v1h-1zM379,487h1v1h-1zM383,487h1v1h-1zM387,487h1v1h-1zM391,487h1v1h-1zM395,487h1v1h-1zM399,487h1v1h-1zM403,487h1v1h-1zM407,487h1v1h-1zM411,487h1v1h-1zM415,487h1v1h-1zM419,487h1v1h-1zM423,487h1v1h-1zM427,487h1v1h-1zM431,487h1v1h-1zM435,487h1v1h-1zM439,487h1v1h-1zM443,487h1v1h-1zM447,487h1v1h-1zM451,487h1v1h-1zM455,487h1v1h-1zM459,487h1v1h-1zM463,487h1v1h-1zM467,487h1v1h-1zM471,487h1v1h-1zM475,487h1v1h-1zM479,487h1v1h-1zM483,487h1v1h-1zM487,487h1v1h-1zM491,487h1v1h-1zM495,487h1v1h-1zM499,487h1v1h-1zM503,487h1v1h-1zM69,489h1v1h-1zM73,489h1v1h-1zM77,489h1v1h-1zM81,489h1v1h-1zM85,489h1v1h-1zM89,489h1v1h-1zM93,489h1v1h-1zM97,489h1v1h-1zM101,489h1v1h-1zM105,489h1v1h-1zM109,489h1v1h-1zM113,489h1v1h-1zM117,489h1v1h-1zM121,489h1v1h-1zM125,489h1v1h-1zM129,489h1v1h-1zM133,489h1v1h-1zM137,489h1v1h-1zM141,489h1v1h-1zM145,489h1v1h-1zM149,489h1v1h-1zM153,489h1v1h-1zM157,489h1v1h-1zM161,489h1v1h-1zM165,489h1v1h-1zM169,489h1v1h-1zM173,489h1v1h-1zM177,489h1v1h-1zM181,489h1v1h-1zM185,489h1v1h-1zM189,489h1v1h-1zM193,489h1v1h-1zM197,489h1v1h-1zM201,489h1v1h-1zM205,489h1v1h-1zM209,489h1v1h-1zM213,489h1v1h-1zM217,489h1v1h-1zM221,489h1v1h-1zM225,489h1v1h-1zM229,489h1v1h-1zM233,489h1v1h-1zM237,489h1v1h-1zM241,489h1v1h-1zM245,489h1v1h-1zM249,489h1v1h-1zM253,489h1v1h-1zM257,489h1v1h-1zM261,489h1v1h-1zM265,489h1v1h-1zM269,489h1v1h-1zM273,489h1v1h-1zM277,489h1v1h-1zM281,489h1v1h-1zM285,489h1v1h-1zM289,489h1v1h-1zM293,489h1v1h-1zM297,489h1v1h-1zM301,489h1v1h-1zM305,489h1v1h-1zM309,489h1v1h-1zM313,489h1v1h-1zM317,489h1v1h-1zM321,489h1v1h-1zM325,489h1v1h-1zM329,489h1v1h-1zM333,489h1v1h-1zM337,489h1v1h-1zM341,489h1v1h-1zM345,489h1v1h-1zM349,489h1v1h-1zM353,489h1v1h-1zM357,489h1v1h-1zM361,489h1v1h-1zM365,489h1v1h-1zM369,489h1v1h-1zM373,489h1v1h-1zM377,489h1v1h-1zM381,489h1v1h-1zM385,489h1v1h-1zM389,489h1v1h-1zM393,489h1v1h-1zM397,489h1v1h-1zM401,489h1v1h-1zM405,489h1v1h-1zM409,489h1v1h-1zM413,489h1v1h-1zM417,489h1v1h-1zM421,489h1v1h-1zM425,489h1v1h-1zM429,489h1v1h-1zM433,489h1v1h-1zM437,489h1v1h-1zM441,489h1v1h-1zM445,489h1v1h-1zM449,489h1v1h-1zM453,489h1v1h-1zM457,489h1v1h-1zM461,489h1v1h-1zM465,489h1v1h-1zM469,489h1v1h-1zM473,489h1v1h-1zM477,489h1v1h-1zM481,489h1v1h-1zM485,489h1v1h-1zM489,489h1v1h-1zM493,489h1v1h-1zM497,489h1v1h-1zM501,489h1v1h-1zM71,491h1v1h-1zM75,491h1v1h-1zM79,491h1v1h-1zM83,491h1v1h-1zM87,491h1v1h-1zM91,491h1v1h-1zM95,491h1v1h-1zM99,491h1v1h-1zM103,491h1v1h-1zM107,491h1v1h-1zM111,491h1v1h-1zM115,491h1v1h-1zM119,491h1v1h-1zM123,491h1v1h-1zM127,491h1v1h-1zM131,491h1v1h-1zM135,491h1v1h-1zM139,491h1v1h-1zM143,491h1v1h-1zM147,491h1v1h-1zM151,491h1v1h-1zM155,491h1v1h-1zM159,491h1v1h-1zM163,491h1v1h-1zM167,491h1v1h-1zM171,491h1v1h-1zM175,491h1v1h-1zM179,491h1v1h-1zM183,491h1v1h-1zM187,491h1v1h-1zM191,491h1v1h-1zM195,491h1v1h-1zM199,491h1v1h-1zM203,491h1v1h-1zM207,491h1v1h-1zM211,491h1v1h-1zM215,491h1v1h-1zM219,491h1v1h-1zM223,491h1v1h-1zM227,491h1v1h-1zM231,491h1v1h-1zM235,491h1v1h-1zM239,491h1v1h-1zM243,491h1v1h-1zM247,491h1v1h-1zM251,491h1v1h-1zM255,491h1v1h-1zM259,491h1v1h-1zM263,491h1v1h-1zM267,491h1v1h-1zM271,491h1v1h-1zM275,491h1v1h-1zM279,491h1v1h-1zM283,491h1v1h-1zM287,491h1v1h-1zM291,491h1v1h-1zM295,491h1v1h-1zM299,491h1v1h-1zM303,491h1v1h-1zM307,491h1v1h-1zM311,491h1v1h-1zM315,491h1v1h-1zM319,491h1v1h-1zM323,491h1v1h-1zM327,491h1v1h-1zM331,491h1v1h-1zM335,491h1v1h-1zM339,491h1v1h-1zM343,491h1v1h-1zM347,491h1v1h-1zM351,491h1v1h-1zM355,491h1v1h-1zM359,491h1v1h-1zM363,491h1v1h-1zM367,491h1v1h-1zM371,491h1v1h-1zM375,491h1v1h-1zM379,491h1v1h-1zM383,491h1v1h-1zM387,491h1v1h-1zM391,491h1v1h-1zM395,491h1v1h-1zM399,491h1v1h-1zM403,491h1v1h-1zM407,491h1v1h-1zM411,491h1v1h-1zM415,491h1v1h-1zM419,491h1v1h-1zM423,491h1v1h-1zM427,491h1v1h-1zM431,491h1v1h-1zM435,491h1v1h-1zM439,491h1v1h-1zM443,491h1v1h-1zM447,491h1v1h-1zM451,491h1v1h-1zM455,491h1v1h-1zM459,491h1v1h-1zM463,491h1v1h-1zM467,491h1v1h-1zM471,491h1v1h-1zM475,491h1v1h-1zM479,491h1v1h-1zM483,491h1v1h-1zM487,491h1v1h-1zM491,491h1v1h-1zM495,491h1v1h-1zM499,491h1v1h-1zM503,491h1v1h-1zM69,493h1v1h-1zM73,493h1v1h-1zM77,493h1v1h-1zM81,493h1v1h-1zM85,493h1v1h-1zM89,493h1v1h-1zM93,493h1v1h-1zM97,493h1v1h-1zM101,493h1v1h-1zM105,493h1v1h-1zM109,493h1v1h-1zM113,493h1v1h-1zM117,493h1v1h-1zM121,493h1v1h-1zM125,493h1v1h-1zM129,493h1v1h-1zM133,493h1v1h-1zM137,493h1v1h-1zM141,493h1v1h-1zM145,493h1v1h-1zM149,493h1v1h-1zM153,493h1v1h-1zM157,493h1v1h-1zM161,493h1v1h-1zM165,493h1v1h-1zM169,493h1v1h-1zM173,493h1v1h-1zM177,493h1v1h-1zM181,493h1v1h-1zM185,493h1v1h-1zM189,493h1v1h-1zM193,493h1v1h-1zM197,493h1v1h-1zM201,493h1v1h-1zM205,493h1v1h-1zM209,493h1v1h-1zM213,493h1v1h-1zM217,493h1v1h-1zM221,493h1v1h-1zM225,493h1v1h-1zM229,493h1v1h-1zM233,493h1v1h-1zM237,493h1v1h-1zM241,493h1v1h-1zM245,493h1v1h-1zM249,493h1v1h-1zM253,493h1v1h-1zM257,493h1v1h-1zM261,493h1v1h-1zM265,493h1v1h-1zM269,493h1v1h-1zM273,493h1v1h-1zM277,493h1v1h-1zM281,493h1v1h-1zM285,493h1v1h-1zM289,493h1v1h-1zM293,493h1v1h-1zM297,493h1v1h-1zM301,493h1v1h-1zM305,493h1v1h-1zM309,493h1v1h-1zM313,493h1v1h-1zM317,493h1v1h-1zM321,493h1v1h-1zM325,493h1v1h-1zM329,493h1v1h-1zM333,493h1v1h-1zM337,493h1v1h-1zM341,493h1v1h-1zM345,493h1v1h-1zM349,493h1v1h-1zM353,493h1v1h-1zM357,493h1v1h-1zM361,493h1v1h-1zM365,493h1v1h-1zM369,493h1v1h-1zM373,493h1v1h-1zM377,493h1v1h-1zM381,493h1v1h-1zM385,493h1v1h-1zM389,493h1v1h-1zM393,493h1v1h-1zM397,493h1v1h-1zM401,493h1v1h-1zM405,493h1v1h-1zM409,493h1v1h-1zM413,493h1v1h-1zM417,493h1v1h-1zM421,493h1v1h-1zM425,493h1v1h-1zM429,493h1v1h-1zM433,493h1v1h-1zM437,493h1v1h-1zM441,493h1v1h-1zM445,493h1v1h-1zM449,493h1v1h-1zM453,493h1v1h-1zM457,493h1v1h-1zM461,493h1v1h-1zM465,493h1v1h-1zM469,493h1v1h-1zM473,493h1v1h-1zM477,493h1v1h-1zM481,493h1v1h-1zM485,493h1v1h-1zM489,493h1v1h-1zM493,493h1v1h-1zM497,493h1v1h-1zM501,493h1v1h-1z" fill="#7a7a7a"/><rect x="69" y="494.5" width="435" height="17.5" fill="#808080"/><rect x="69" y="512" width="435" height="2" fill="#3a3a40"/><rect x="69" y="514" width="435" height="3" fill="#808000"/><rect x="69" y="517" width="435" height="0.6" fill="#303030"/><rect x="69" y="517.6" width="435" height="8.6" fill="#ff7f50"/><rect x="69" y="526.2" width="435" height="0.6" fill="#404040"/><rect x="69" y="526.8" width="435" height="41.200000000000045" fill="#5f9ea0"/><rect x="69" y="465" width="435" height="1" fill="#808080"/><rect x="69" y="568" width="435" height="1" fill="#808080"/><rect x="69" y="465" width="1" height="104" fill="#808080"/><rect x="504" y="465" width="1" height="104" fill="#ff0000"/><rect x="200" y="569" width="1" height="3" fill="#808080"/><rect x="345" y="569" width="1" height="3" fill="#808080"/><rect x="490" y="569" width="1" height="3" fill="#808080"/><text x="200.5" y="584" font-size="12" fill="#fff" text-anchor="middle" font-weight="normal" font-family='"Liberation Sans", sans-serif'  textLength="62" lengthAdjust="spacingAndGlyphs">7:50:00 AM</text><text x="345.5" y="584" font-size="12" fill="#fff" text-anchor="middle" font-weight="normal" font-family='"Liberation Sans", sans-serif'  textLength="62" lengthAdjust="spacingAndGlyphs">8:00:00 AM</text><text x="490.5" y="584" font-size="12" fill="#fff" text-anchor="middle" font-weight="normal" font-family='"Liberation Sans", sans-serif'  textLength="62" lengthAdjust="spacingAndGlyphs">8:10:00 AM</text><rect x="558" y="464" width="3" height="1" fill="#808080"/><text x="555" y="470" font-size="12" fill="#fff" text-anchor="end" font-weight="normal" font-family='"Liberation Sans", sans-serif' >1,400</text><line x1="563" y1="479.5" x2="872" y2="479.5" stroke="#808080" stroke-width="1" stroke-dasharray="1 1"/><rect x="558" y="479" width="3" height="1" fill="#808080"/><text x="555" y="485" font-size="12" fill="#fff" text-anchor="end" font-weight="normal" font-family='"Liberation Sans", sans-serif' >1,200</text><line x1="563" y1="494.5" x2="872" y2="494.5" stroke="#808080" stroke-width="1" stroke-dasharray="1 1"/><rect x="558" y="494" width="3" height="1" fill="#808080"/><text x="555" y="500" font-size="12" fill="#fff" text-anchor="end" font-weight="normal" font-family='"Liberation Sans", sans-serif' >1,000</text><line x1="563" y1="509.5" x2="872" y2="509.5" stroke="#808080" stroke-width="1" stroke-dasharray="1 1"/><rect x="558" y="509" width="3" height="1" fill="#808080"/><text x="555" y="515" font-size="12" fill="#fff" text-anchor="end" font-weight="normal" font-family='"Liberation Sans", sans-serif' >800</text><line x1="563" y1="524.5" x2="872" y2="524.5" stroke="#808080" stroke-width="1" stroke-dasharray="1 1"/><rect x="558" y="524" width="3" height="1" fill="#808080"/><text x="555" y="530" font-size="12" fill="#fff" text-anchor="end" font-weight="normal" font-family='"Liberation Sans", sans-serif' >600</text><line x1="563" y1="539.5" x2="872" y2="539.5" stroke="#808080" stroke-width="1" stroke-dasharray="1 1"/><rect x="558" y="539" width="3" height="1" fill="#808080"/><text x="555" y="545" font-size="12" fill="#fff" text-anchor="end" font-weight="normal" font-family='"Liberation Sans", sans-serif' >400</text><line x1="563" y1="554.5" x2="872" y2="554.5" stroke="#808080" stroke-width="1" stroke-dasharray="1 1"/><rect x="558" y="554" width="3" height="1" fill="#808080"/><text x="555" y="560" font-size="12" fill="#fff" text-anchor="end" font-weight="normal" font-family='"Liberation Sans", sans-serif' >200</text><rect x="558" y="569" width="3" height="1" fill="#808080"/><text x="555" y="575" font-size="12" fill="#fff" text-anchor="end" font-weight="normal" font-family='"Liberation Sans", sans-serif' >0</text><line x1="654.5" y1="466" x2="654.5" y2="569" stroke="#808080" stroke-width="1" stroke-dasharray="1 1"/><line x1="758.5" y1="466" x2="758.5" y2="569" stroke="#808080" stroke-width="1" stroke-dasharray="1 1"/><line x1="862.5" y1="466" x2="862.5" y2="569" stroke="#808080" stroke-width="1" stroke-dasharray="1 1"/><rect x="562" y="568" width="310" height="1" fill="#a84a10"/><path d="M599.2,568.5 L600.8,509.0 L602.5,546.7 L604.2,552.0 L605.6,560.3 L607.6,568.5" fill="none" stroke="#ff8c00" stroke-width="1.4" stroke-linejoin="round" shape-rendering="geometricPrecision"/><path d="M625.0,568.5 L626.6,508.5 L628.6,568.5" fill="none" stroke="#ff4500" stroke-width="1.4" stroke-linejoin="round" shape-rendering="geometricPrecision"/><path d="M708.3,568.5 L709.9,472.0 L711.7,568.5" fill="none" stroke="#ff4500" stroke-width="1.4" stroke-linejoin="round" shape-rendering="geometricPrecision"/><rect x="561" y="464" width="311" height="1" fill="#808080"/><rect x="561" y="569" width="311" height="1" fill="#808080"/><rect x="561" y="464" width="1" height="106" fill="#808080"/><rect x="872" y="464" width="1" height="106" fill="#ff0000"/><rect x="654" y="570" width="1" height="3" fill="#808080"/><rect x="758" y="570" width="1" height="3" fill="#808080"/><rect x="862" y="570" width="1" height="3" fill="#808080"/><text x="654.5" y="584" font-size="12" fill="#fff" text-anchor="middle" font-weight="normal" font-family='"Liberation Sans", sans-serif'  textLength="62" lengthAdjust="spacingAndGlyphs">7:50:00 AM</text><text x="758.5" y="584" font-size="12" fill="#fff" text-anchor="middle" font-weight="normal" font-family='"Liberation Sans", sans-serif'  textLength="62" lengthAdjust="spacingAndGlyphs">8:00:00 AM</text><text x="862.5" y="584" font-size="12" fill="#fff" text-anchor="middle" font-weight="normal" font-family='"Liberation Sans", sans-serif'  textLength="62" lengthAdjust="spacingAndGlyphs">8:10:00 AM</text><rect x="68" y="667" width="3" height="1" fill="#808080"/><text x="65" y="673" font-size="12" fill="#fff" text-anchor="end" font-weight="normal" font-family='"Liberation Sans", sans-serif' >2,500</text><line x1="73" y1="687.5" x2="840" y2="687.5" stroke="#808080" stroke-width="1" stroke-dasharray="1 1"/><rect x="68" y="687" width="3" height="1" fill="#808080"/><text x="65" y="693" font-size="12" fill="#fff" text-anchor="end" font-weight="normal" font-family='"Liberation Sans", sans-serif' >2,000</text><line x1="73" y1="706.5" x2="840" y2="706.5" stroke="#808080" stroke-width="1" stroke-dasharray="1 1"/><rect x="68" y="706" width="3" height="1" fill="#808080"/><text x="65" y="712" font-size="12" fill="#fff" text-anchor="end" font-weight="normal" font-family='"Liberation Sans", sans-serif' >1,500</text><line x1="73" y1="725.5" x2="840" y2="725.5" stroke="#808080" stroke-width="1" stroke-dasharray="1 1"/><rect x="68" y="725" width="3" height="1" fill="#808080"/><text x="65" y="731" font-size="12" fill="#fff" text-anchor="end" font-weight="normal" font-family='"Liberation Sans", sans-serif' >1,000</text><line x1="73" y1="744.5" x2="840" y2="744.5" stroke="#808080" stroke-width="1" stroke-dasharray="1 1"/><rect x="68" y="744" width="3" height="1" fill="#808080"/><text x="65" y="750" font-size="12" fill="#fff" text-anchor="end" font-weight="normal" font-family='"Liberation Sans", sans-serif' >500</text><rect x="68" y="763" width="3" height="1" fill="#808080"/><text x="65" y="769" font-size="12" fill="#fff" text-anchor="end" font-weight="normal" font-family='"Liberation Sans", sans-serif' >0</text><line x1="173.5" y1="669" x2="173.5" y2="763" stroke="#808080" stroke-width="1" stroke-dasharray="1 1"/><line x1="302.5" y1="669" x2="302.5" y2="763" stroke="#808080" stroke-width="1" stroke-dasharray="1 1"/><line x1="430.5" y1="669" x2="430.5" y2="763" stroke="#808080" stroke-width="1" stroke-dasharray="1 1"/><line x1="558.5" y1="669" x2="558.5" y2="763" stroke="#808080" stroke-width="1" stroke-dasharray="1 1"/><line x1="686.5" y1="669" x2="686.5" y2="763" stroke="#808080" stroke-width="1" stroke-dasharray="1 1"/><line x1="815.5" y1="669" x2="815.5" y2="763" stroke="#808080" stroke-width="1" stroke-dasharray="1 1"/><rect x="72" y="762" width="768" height="1" fill="#0f5550"/><rect x="72" y="764" width="768" height="1" fill="#2a4a2a"/><path d="M150.0,763.0 L160.0,761.8 L175.0,762.0 L190.0,763.0" fill="none" stroke="#20b2aa" stroke-width="1.0" stroke-linejoin="round" shape-rendering="geometricPrecision"/><path d="M230.0,763.0 L245.0,762.0 L270.0,762.2 L285.0,763.0" fill="none" stroke="#20b2aa" stroke-width="1.0" stroke-linejoin="round" shape-rendering="geometricPrecision"/><path d="M770.0,763.0 L780.0,761.8 L800.0,762.2 L815.0,763.0" fill="none" stroke="#20b2aa" stroke-width="1.0" stroke-linejoin="round" shape-rendering="geometricPrecision"/><path d="M72.0,763.5 L105.5,763.5 L113.6,747.4 L122.2,763.5 L175.0,763.5 L182.4,757.7 L189.6,763.5 L242.0,763.5 L250.6,757.0 L260.0,763.5 L379.5,763.5 L388.4,756.3 L396.3,755.2 L403.6,762.1 L413.0,758.1 L422.0,762.0 L438.7,762.0 L447.7,757.0 L454.4,757.7 L462.2,761.5 L470.0,761.5 L478.0,763.5 L515.8,763.5 L524.7,751.9 L532.6,755.4 L540.4,762.1 L568.3,762.6 L584.4,756.3 L591.8,762.6 L648.8,762.6 L661.0,759.7 L666.7,762.6 L687.0,763.5 L694.6,761.0 L703.6,763.5 L712.5,760.3 L720.3,763.5 L755.6,763.5 L763.6,685.5 L772.8,761.5 L780.0,763.5 L839.0,763.5" fill="none" stroke="#7ee07e" stroke-width="1.1" stroke-linejoin="round" shape-rendering="geometricPrecision"/><rect x="71" y="667" width="769" height="1" fill="#808080"/><rect x="71" y="763" width="769" height="1" fill="#808080"/><rect x="71" y="667" width="1" height="97" fill="#808080"/><rect x="840" y="667" width="1" height="97" fill="#ff0000"/><rect x="173" y="764" width="1" height="3" fill="#808080"/><rect x="302" y="764" width="1" height="3" fill="#808080"/><rect x="430" y="764" width="1" height="3" fill="#808080"/><rect x="558" y="764" width="1" height="3" fill="#808080"/><rect x="686" y="764" width="1" height="3" fill="#808080"/><rect x="815" y="764" width="1" height="3" fill="#808080"/><text x="173.5" y="779" font-size="12" fill="#fff" text-anchor="middle" font-weight="normal" font-family='"Liberation Sans", sans-serif'  textLength="62" lengthAdjust="spacingAndGlyphs">7:45:00 AM</text><text x="302.5" y="779" font-size="12" fill="#fff" text-anchor="middle" font-weight="normal" font-family='"Liberation Sans", sans-serif'  textLength="62" lengthAdjust="spacingAndGlyphs">7:50:00 AM</text><text x="430.5" y="779" font-size="12" fill="#fff" text-anchor="middle" font-weight="normal" font-family='"Liberation Sans", sans-serif'  textLength="62" lengthAdjust="spacingAndGlyphs">7:55:00 AM</text><text x="558.5" y="779" font-size="12" fill="#fff" text-anchor="middle" font-weight="normal" font-family='"Liberation Sans", sans-serif'  textLength="62" lengthAdjust="spacingAndGlyphs">8:00:00 AM</text><text x="686.5" y="779" font-size="12" fill="#fff" text-anchor="middle" font-weight="normal" font-family='"Liberation Sans", sans-serif'  textLength="62" lengthAdjust="spacingAndGlyphs">8:05:00 AM</text><text x="815.5" y="779" font-size="12" fill="#fff" text-anchor="middle" font-weight="normal" font-family='"Liberation Sans", sans-serif'  textLength="62" lengthAdjust="spacingAndGlyphs">8:10:00 AM</text><rect x="133" y="607" width="22" height="10" fill="#b0c4de" /><text x="160" y="617.7" font-size="12" fill="#fff" text-anchor="start" font-weight="normal" font-family='"Liberation Sans", sans-serif'  textLength="56" lengthAdjust="spacingAndGlyphs">File cache</text><rect x="229" y="607" width="22" height="10" fill="#808080" /><text x="255.8" y="617.7" font-size="12" fill="#fff" text-anchor="start" font-weight="normal" font-family='"Liberation Sans", sans-serif'  textLength="30.5" lengthAdjust="spacingAndGlyphs">Other</text><rect x="301.5" y="607.5" width="22" height="10" fill="#000" stroke="#808080"/><path d="M305,609h1v1h-1zM309,609h1v1h-1zM313,609h1v1h-1zM317,609h1v1h-1zM321,609h1v1h-1zM303,611h1v1h-1zM307,611h1v1h-1zM311,611h1v1h-1zM315,611h1v1h-1zM319,611h1v1h-1zM305,613h1v1h-1zM309,613h1v1h-1zM313,613h1v1h-1zM317,613h1v1h-1zM321,613h1v1h-1zM303,615h1v1h-1zM307,615h1v1h-1zM311,615h1v1h-1zM315,615h1v1h-1zM319,615h1v1h-1z" fill="#8a8a8a"/><text x="327.5" y="617.7" font-size="12" fill="#fff" text-anchor="start" font-weight="normal" font-family='"Liberation Sans", sans-serif'  textLength="51.5" lengthAdjust="spacingAndGlyphs">Available</text><text x="605.8" y="617.7" font-size="12" fill="#fff" text-anchor="start" font-weight="normal" font-family='"Liberation Sans", sans-serif'  textLength="36.5" lengthAdjust="spacingAndGlyphs">Faults:</text><rect x="656" y="607" width="22" height="10" fill="#ff8c00" /><text x="682.8" y="617.7" font-size="12" fill="#fff" text-anchor="start" font-weight="normal" font-family='"Liberation Sans", sans-serif'  textLength="30" lengthAdjust="spacingAndGlyphs">Read</text><rect x="726" y="607" width="22" height="10" fill="#ff4500" /><text x="752.5" y="617.7" font-size="12" fill="#fff" text-anchor="start" font-weight="normal" font-family='"Liberation Sans", sans-serif'  textLength="28.5" lengthAdjust="spacingAndGlyphs">Write</text><rect x="129" y="806" width="22" height="10" fill="#98fb98" /><text x="155.3" y="816" font-size="12" fill="#fff" text-anchor="start" font-weight="normal" font-family='"Liberation Sans", sans-serif'  textLength="49.5" lengthAdjust="spacingAndGlyphs">ms/Read</text><rect x="218" y="806" width="22" height="10" fill="#20b2aa" /><text x="244.2" y="816" font-size="12" fill="#fff" text-anchor="start" font-weight="normal" font-family='"Liberation Sans", sans-serif'  textLength="47.5" lengthAdjust="spacingAndGlyphs">ms/Write</text>
</svg>
</body></html>
